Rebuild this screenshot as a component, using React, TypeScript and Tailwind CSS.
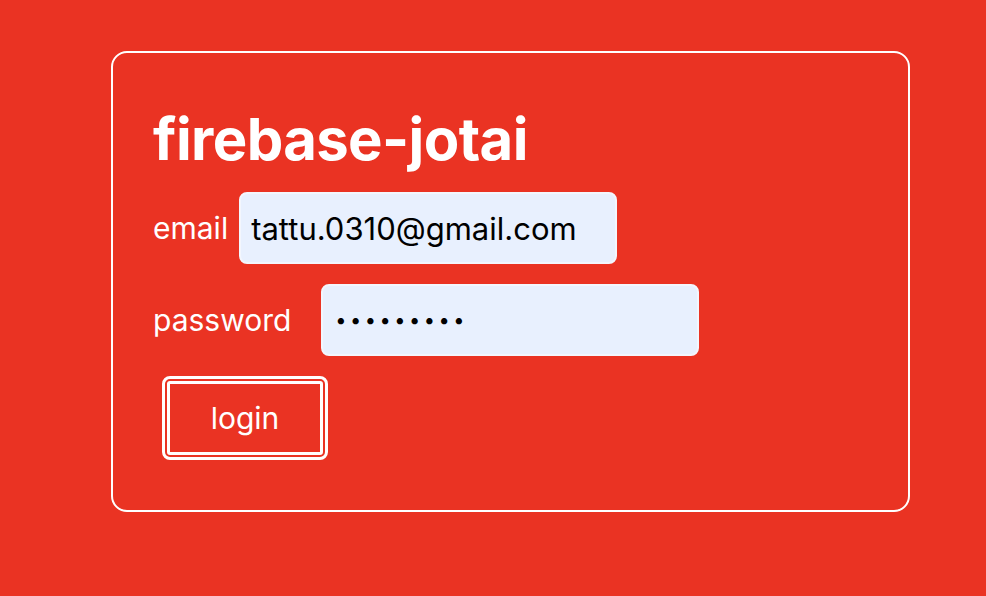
import { useState } from 'react';

// Simple sign-in card for the firebase-jotai demo
export default function App() {
  const [email, setEmail] = useState('tattu.0310@gmail.com');
  const [password, setPassword] = useState('password1');

  return (
    <div
      className="min-h-screen w-full bg-[#ea3323] pt-[51px] pl-[111px] text-white"
      style={{ fontFamily: 'Inter, "Noto Sans", sans-serif' }}
    >
      <div className="w-[799px] h-[461px] rounded-[16px] border-2 border-white px-[40px] pt-[57px]">
        <h1 className="text-[58px] font-bold leading-[58px] tracking-[-0.6px]">firebase-jotai</h1>

        <div className="mt-[24px] flex items-center">
          <label className="text-[30px] leading-none mr-[11px]">email</label>
          <input
            className="w-[378px] h-[72px] rounded-[8px] border-2 border-[#f3f6fd] bg-[#e8f0fe] px-[10px] text-[31px] text-black outline-none"
            value={email}
            onChange={(e) => setEmail(e.target.value)}
          />
        </div>

        <div className="mt-[20px] flex items-center">
          <label className="text-[30px] leading-none mr-[30px]">password</label>
          <input
            type="password"
            className="w-[378px] h-[72px] rounded-[8px] border-2 border-[#f3f6fd] bg-[#e8f0fe] px-[12px] text-[20px] tracking-[3.5px] text-black outline-none"
            value={password}
            onChange={(e) => setPassword(e.target.value)}
          />
        </div>

        <button className="mt-[20px] ml-[9px] w-[166px] h-[84px] rounded-[8px] border-[8px] border-double border-white text-[30px] text-white">
          login
        </button>
      </div>
    </div>
  );
}
